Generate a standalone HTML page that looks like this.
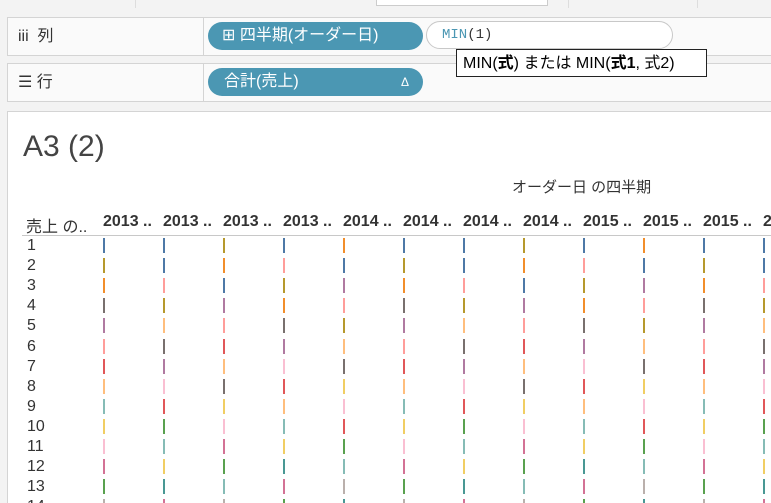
<!DOCTYPE html>
<html><head><meta charset="utf-8">
<style>
html,body{margin:0;width:771px;height:503px;overflow:hidden}
body{background:#f3f3f3;font-family:"Liberation Sans","Noto Sans CJK JP",sans-serif;color:#333}
#w{position:relative;width:771px;height:503px;overflow:hidden}
.top{position:absolute;left:0;top:0;width:771px;height:9px;background:#f3f3f3}
.shelf{position:absolute;left:7px;width:764px;height:37px;background:#fafafa;border:1px solid #d4d4d4;border-right:none}
.lab{position:absolute;left:0;top:0;width:196px;height:37px;border-right:1px solid #d4d4d4;font-size:16px;line-height:37px;padding-left:10px;box-sizing:border-box}
.pill{position:absolute;height:28px;border-radius:14px;background:#4b97b3;color:#fff;font-size:16px;line-height:28px;box-sizing:border-box}
.panel{position:absolute;left:7px;top:111px;width:764px;height:392px;background:#fff;border:1px solid #d4d4d4;border-right:none;border-bottom:none}
.t{position:absolute;white-space:nowrap}
.tick{position:absolute;width:2px;height:15px}
</style></head><body><div id="w">
<div class="top"><div style="position:absolute;left:135px;top:0;width:1px;height:8px;background:#ddd"></div><div style="position:absolute;left:376px;top:0;width:170px;height:5px;border:1px solid #ccc;border-top:none;background:#fff"></div><div style="position:absolute;left:568px;top:0;width:1px;height:8px;background:#ddd"></div><div style="position:absolute;left:697px;top:0;width:1px;height:8px;background:#ddd"></div></div>
<div class="shelf" style="top:17px"><div class="lab">iii&nbsp; 列</div></div>
<div class="shelf" style="top:63px"><div class="lab">☰ 行</div></div>
<div class="pill" style="left:208px;top:22px;width:215px;padding-left:14px">⊞ 四半期(オーダー日)</div>
<div class="pill" style="left:426px;top:21px;width:247px;height:28px;background:#fff;border:1px solid #c8c8c8;color:#333;padding-left:15px;font-family:'Liberation Mono',monospace;font-size:14px;line-height:27px"><span style="color:#4b97b3">MIN</span>(1)</div>
<div class="t" style="left:456px;top:49px;width:251px;height:28px;border:1px solid #222;background:#fff;font-size:16px;line-height:28px;padding-left:6px;box-sizing:border-box;z-index:3;color:#000">MIN(<b>式</b>) または MIN(<b>式1</b>, 式2)</div>
<div class="pill" style="left:208px;top:68px;width:215px;padding-left:16px">合計(売上)<span style="position:absolute;right:14px;font-size:12px">Δ</span></div>
<div class="panel"></div>
<div class="t" style="left:23px;top:130px;font-size:30px;color:#444;font-weight:300">A3 (2)</div>
<div class="t" style="left:512px;top:176px;font-size:15px;color:#333">オーダー日 の四半期</div>
<div class="t" style="left:26px;top:213px;font-size:16px;color:#333">売上 の..</div>
<div id="hd"></div>
<div style="position:absolute;left:22px;top:235px;width:749px;height:1px;background:#c8c8c8"></div>
<div id="g"></div>
</div>
<script>
var yrs=["2013","2013","2013","2013","2014","2014","2014","2014","2015","2015","2015","2015"];
var h="";
for(var i=0;i<12;i++){h+='<div class="t" style="left:'+(103+i*60)+'px;top:213px;font-size:16px;font-weight:bold;color:#333">'+yrs[i]+' ..</div>';}
document.getElementById("hd").innerHTML=h;
var P=["#4e79a7","#f28e2b","#b6992d","#ff9d9a","#b07aa1","#79706e","#ffbe7d","#e15759","#fabfd2","#f1ce63","#86bcb6","#59a14f","#d37295","#499894","#bab0ac"];
var g="";
for(var r=0;r<14;r++){
 var y=238+r*20.1;
 g+='<div class="t" style="left:27px;top:'+(y-1)+'px;font-size:16px;color:#333">'+(r+1)+'</div>';
 for(var c=0;c<12;c++){
  var k=Math.max(0,Math.min(14,r+((c*7+r*3)%5)-2));
  g+='<div class="tick" style="left:'+(103+c*60)+'px;top:'+y+'px;background:'+P[k]+'"></div>';
 }
}
document.getElementById("g").innerHTML=g;
</script>
</body></html>
